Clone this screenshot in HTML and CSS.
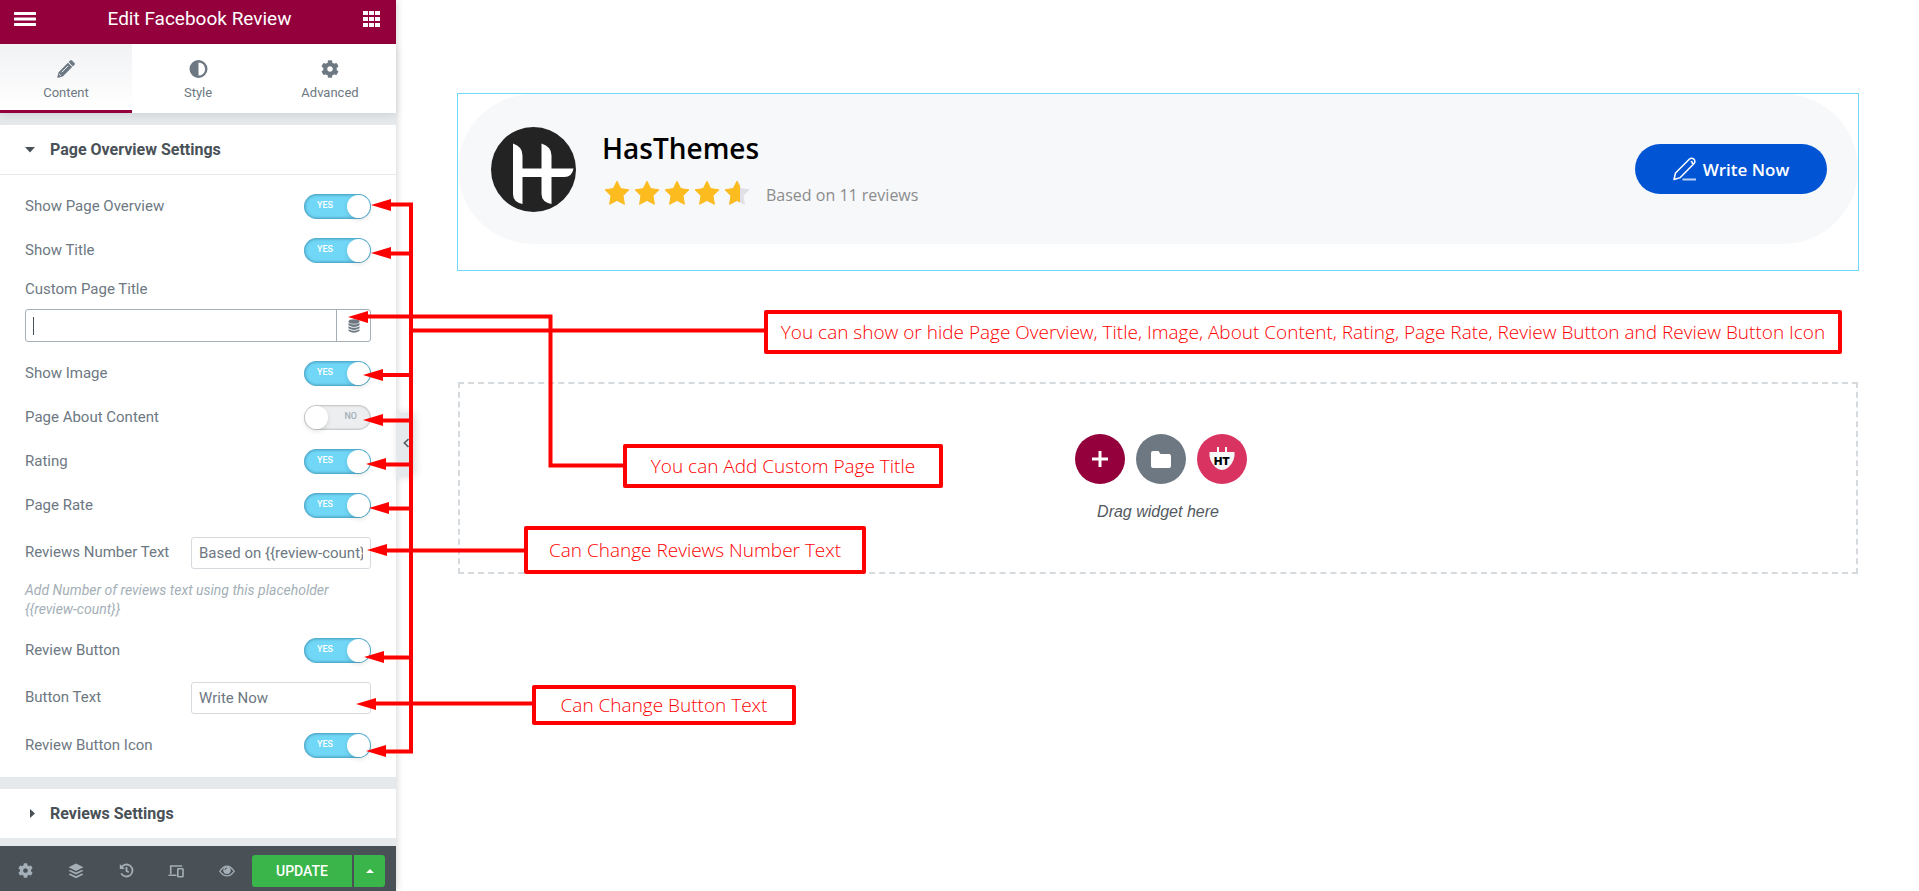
FILE: index.html
```html
<!DOCTYPE html>
<html lang="en">
<head>
  <meta charset="UTF-8">
  <meta name="viewport" content="width=device-width, initial-scale=1.0">
  <title>Edit Facebook Review</title>
  <link rel="stylesheet" href="styles.css">
</head>
<body>

<svg class="sprite" aria-hidden="true">
  <symbol id="cog" viewBox="0 0 512 512"><path fill="currentColor" d="M487.4 315.7l-42.6-24.6c4.3-23.2 4.3-47 0-70.2l42.6-24.6c4.9-2.8 7.1-8.6 5.5-14-11.1-35.6-30-67.8-54.7-94.6-3.8-4.1-10-5.1-14.8-2.3L380.8 110c-17.9-15.4-38.5-27.3-60.8-35.1V25.8c0-5.6-3.9-10.5-9.4-11.7-36.7-8.2-74.3-7.8-109.2 0-5.5 1.2-9.4 6.1-9.4 11.7V75c-22.2 7.9-42.8 19.8-60.8 35.1L88.7 85.500c-4.9-2.8-11-1.9-14.8 2.3-24.7 26.7-43.6 58.9-54.7 94.6-1.7 5.4.6 11.2 5.5 14L67.3 221c-4.3 23.2-4.3 47 0 70.2l-42.6 24.6c-4.9 2.8-7.1 8.6-5.5 14 11.1 35.6 30 67.8 54.7 94.6 3.8 4.1 10 5.1 14.8 2.3l42.6-24.6c17.9 15.4 38.5 27.3 60.8 35.1v49.2c0 5.6 3.9 10.5 9.4 11.7 36.7 8.2 74.3 7.8 109.2 0 5.5-1.2 9.4-6.1 9.4-11.7v-49.2c22.2-7.9 42.8-19.8 60.8-35.1l42.6 24.6c4.9 2.8 11 1.9 14.8-2.3 24.7-26.7 43.6-58.9 54.7-94.6 1.5-5.5-.7-11.3-5.6-14.1zM256 336c-44.1 0-80-35.9-80-80s35.9-80 80-80 80 35.9 80 80-35.9 80-80 80z"/></symbol>
  <symbol id="star" viewBox="0 0 26 26"><path d="M13 1.200l3.700 7.400 8.200 1.200-5.900 5.900 1.400 8.600L13 20.400l-7.400 3.900L7 15.700 1.100 9.800l8.200-1.200z" stroke-width="1" stroke-linejoin="round"/></symbol>
  <symbol id="arrow" viewBox="0 0 20 12"><path fill="#f00" d="M0 6L20 0v12z"/></symbol>
</svg>

<div class="editor">

  <aside class="panel">
    <header class="panel-header">
      <button class="icon-btn" aria-label="Menu">
        <svg width="22" height="14" viewBox="0 0 22 14"><path fill="#fff" d="M1 0h20a1 1 0 0 1 0 3H1a1 1 0 0 1 0-3zM1 5.500h20a1 1 0 0 1 0 3H1a1 1 0 0 1 0-3zM1 11h20a1 1 0 0 1 0 3H1a1 1 0 0 1 0-3z"/></svg>
      </button>
      <h1>Edit Facebook Review</h1>
      <button class="icon-btn" aria-label="Widgets">
        <svg width="17" height="16" viewBox="0 0 17 16"><path fill="#fff" d="M0 0h5v4H0zM6 0h5v4H6zM12 0h5v4h-5zM0 6h5v4H0zM6 6h5v4H6zM12 6h5v4h-5zM0 12h5v4H0zM6 12h5v4H6zM12 12h5v4h-5z"/></svg>
      </button>
    </header>

    <nav class="tabs">
      <button class="tab active">
        <svg width="18" height="18" viewBox="0 0 18 18"><path fill="currentColor" d="M11.600 2.100l1.600-1.600q.9-.8 1.800 0l2.500 2.500q.8.9 0 1.800l-1.600 1.600zM10.900 2.800l4.300 4.300-9.400 9.400-4.700 1.300q-1 .2-.8-.8l1.300-4.800z"/><path stroke="#fff" stroke-width=".9" fill="none" d="M4.800 12.200l6.300-6.300M2.200 14l1.800 1.800"/></svg>
        Content
      </button>
      <button class="tab">
        <svg width="19" height="18" viewBox="0 0 18 18"><circle cx="9" cy="9" r="7.800" fill="none" stroke="currentColor" stroke-width="2.400"/><path fill="currentColor" d="M9 1a8 8 0 0 0 0 16z"/></svg>
        Style
      </button>
      <button class="tab">
        <svg width="18" height="18"><use href="#cog"/></svg>
        Advanced
      </button>
    </nav>

    <div class="panel-body">
      <section class="section">
        <h2 class="section-title"><svg width="10" height="6" viewBox="0 0 10 6"><path fill="currentColor" d="M0 0h10L5 5.500z"/></svg>Page Overview Settings</h2>
        <div class="controls">
          <div class="control">
            <label for="overview">Show Page Overview</label>
            <span class="switch"><input type="checkbox" id="overview" checked><span class="state">YES</span></span>
          </div>
          <div class="control">
            <label for="title">Show Title</label>
            <span class="switch"><input type="checkbox" id="title" checked><span class="state">YES</span></span>
          </div>
          <div class="control-block">
            <label for="custom-title">Custom Page Title</label>
            <div class="input-group">
              <span class="caret"></span>
              <input type="text" id="custom-title">
              <button aria-label="Dynamic tags">
                <svg width="12" height="14" viewBox="0 0 12 14"><g fill="currentColor"><ellipse cx="6" cy="2.500" rx="5.500" ry="2.300"/><path d="M.5 4q5.500 3 11 0v2.300q-5.500 3.400-11 0zM.5 7.300q5.500 3 11 0v2q-5.500 3.400-11 0zM.5 10.300q5.500 3 11 0v1.700q-5.500 3.400-11 0z"/></g></svg>
              </button>
            </div>
          </div>
          <div class="control">
            <label for="image">Show Image</label>
            <span class="switch"><input type="checkbox" id="image" checked><span class="state">YES</span></span>
          </div>
          <div class="control">
            <label for="about">Page About Content</label>
            <span class="switch"><input type="checkbox" id="about"><span class="state">NO</span></span>
          </div>
          <div class="control">
            <label for="rating">Rating</label>
            <span class="switch"><input type="checkbox" id="rating" checked><span class="state">YES</span></span>
          </div>
          <div class="control">
            <label for="rate">Page Rate</label>
            <span class="switch"><input type="checkbox" id="rate" checked><span class="state">YES</span></span>
          </div>
          <div>
            <div class="control">
              <label for="number-text">Reviews Number Text</label>
              <input class="text-input" type="text" id="number-text" value="Based on {{review-count}} reviews">
            </div>
            <p class="description">Add Number of reviews text using this placeholder {{review-count}}</p>
          </div>
          <div class="control">
            <label for="button">Review Button</label>
            <span class="switch"><input type="checkbox" id="button" checked><span class="state">YES</span></span>
          </div>
          <div class="control">
            <label for="button-text">Button Text</label>
            <input class="text-input" type="text" id="button-text" value="Write Now">
          </div>
          <div class="control">
            <label for="button-icon">Review Button Icon</label>
            <span class="switch"><input type="checkbox" id="button-icon" checked><span class="state">YES</span></span>
          </div>
        </div>
      </section>

      <section class="section">
        <h2 class="section-title closed"><svg width="10" height="9" viewBox="0 0 10 9"><path fill="currentColor" d="M5 0l5 4.500L5 9z"/></svg>Reviews Settings</h2>
      </section>
    </div>

    <footer class="panel-footer">
      <div class="tools">
        <button aria-label="Settings"><svg width="15" height="15"><use href="#cog"/></svg></button>
        <button aria-label="Navigator"><svg width="16" height="16" viewBox="0 0 16 16"><g fill="currentColor"><path d="M8 .5l7.500 3.700L8 8 .5 4.200z"/><path d="M.5 7.800l1.800-.9L8 9.600l5.700-2.700 1.800.9L8 11.500z"/><path d="M.5 11.400l1.800-.9L8 13.200l5.700-2.700 1.800.9L8 15.300z"/></g></svg></button>
        <button aria-label="History"><svg width="15" height="15" viewBox="0 0 15 15"><path fill="none" stroke="currentColor" stroke-width="1.800" d="M2.200 4.700a6 6 0 1 1 0 5.600M7.500 4v4l2.300 1.300"/><path fill="currentColor" d="M.8 1v5h5z"/></svg></button>
        <button aria-label="Responsive Mode"><svg width="16" height="14" viewBox="0 0 16 14"><path fill="none" stroke="currentColor" stroke-width="1.600" d="M2.700 10V2h11.500M.5 11.200h8"/><rect x="9.800" y="4.800" width="5.200" height="8" rx=".6" fill="none" stroke="currentColor" stroke-width="1.600"/></svg></button>
        <button aria-label="Preview Changes"><svg width="16" height="12" viewBox="0 0 16 12"><path fill="none" stroke="currentColor" stroke-width="1.300" d="M.8 6.300Q8-4 15.200 6.300 8 15.500.8 6.300z"/><circle cx="8" cy="5.300" r="3.700" fill="currentColor"/><path d="M6 5q0-2 2-2" fill="none" stroke="#495157"/></svg></button>
      </div>
      <button class="update">UPDATE</button>
      <button class="update-more" aria-label="Save options"><svg width="8" height="4" viewBox="0 0 8 4"><path fill="#fff" d="M4 0l4 4H0z"/></svg></button>
    </footer>
  </aside>

  <main class="preview">
    <button class="collapse" aria-label="Hide panel"><svg width="6" height="10" viewBox="0 0 6 10"><path d="M5.500 1L1.300 5l4.200 4" fill="none" stroke="#556068" stroke-width="1.600"/></svg></button>

    <div class="widget">
      <div class="overview">
        <svg class="logo" width="85" height="85" viewBox="0 0 85 85">
          <circle cx="42.500" cy="42.500" r="42.500" fill="#232323"/>
          <path fill="#fff" d="M22 16.500q9.500 3 9.500 12V41.500h19V16.500q10 3 10 12v13h22q-1.500 8.500-9 8.500h-13v27q-10-2-10-10V50h-19v27q-9.500-2-9.500-10z"/>
        </svg>
        <div class="info">
          <h3>HasThemes</h3>
          <div class="rating">
            <div class="stars">
              <svg width="26" height="26"><use href="#star"/></svg>
              <svg width="26" height="26"><use href="#star"/></svg>
              <svg width="26" height="26"><use href="#star"/></svg>
              <svg width="26" height="26"><use href="#star"/></svg>
              <svg class="partial" width="26" height="26" viewBox="0 0 26 26">
                <clipPath id="filled"><path d="M0 0h16v26H0z"/></clipPath>
                <use class="empty" href="#star"/>
                <use href="#star" clip-path="url(#filled)"/>
              </svg>
            </div>
            <span>Based on 11 reviews</span>
          </div>
        </div>
        <a class="write" href="#">
          <svg width="23" height="24" viewBox="0 0 23 24"><path fill="none" stroke="#fff" stroke-width="1.500" stroke-linejoin="round" d="M1 22.500l1.500-6.500L16.500 2q2.200-1.700 4.300.1 2 2.200.3 4.400L7.300 20.600zM17.800 4.500q2 .2 1.500 2.500"/><path d="M9.500 22.500H23" stroke="#b9d0f3" stroke-width="2"/></svg>
          Write Now
        </a>
      </div>
    </div>

    <div class="drop-area">
      <div class="add-buttons">
        <button class="add" aria-label="Add section"><svg width="16" height="16" viewBox="0 0 16 16"><path stroke="#fff" stroke-width="3" d="M8 0v16M0 8h16"/></svg></button>
        <button class="add folder" aria-label="Add template"><svg width="20" height="17" viewBox="0 0 20 17"><path fill="#fff" d="M2 0h5.500l2 3H18q2 0 2 2v10q0 2-2 2H2q-2 0-2-2V2q0-2 2-2z"/></svg></button>
        <button class="add library" aria-label="HT library">
          <svg width="26" height="24" viewBox="0 0 26 24"><path fill="#f7f7f7" d="M8 0h2v5h6V0h2v5h7.500q.5 4-1 8-4 9.500-11.500 10Q5.500 22.500 1.500 13 0 9 .5 5H8z"/><text x="13" y="18" text-anchor="middle">HT</text></svg>
        </button>
      </div>
      <p>Drag widget here</p>
    </div>
  </main>

  <!-- notes drawn over the editor -->
  <div class="notes">
    <svg class="lines" width="1860" height="891">
      <path d="M388 204.500H411V751.500H384M388 253.500H411M380 375H411M380 420.500H411M382 464.500H411M386 508.500H411M382 657.500H411M411 330.500H766M364 316.500H550.500V465.500H624M384 550.500H526M372 703.500H534"/>
      <use href="#arrow" x="371" y="199" width="20" height="12"/>
      <use href="#arrow" x="371" y="247" width="20" height="12"/>
      <use href="#arrow" x="348" y="311" width="20" height="12"/>
      <use href="#arrow" x="363" y="369" width="20" height="12"/>
      <use href="#arrow" x="363" y="414" width="20" height="12"/>
      <use href="#arrow" x="366" y="458" width="20" height="12"/>
      <use href="#arrow" x="369" y="502" width="20" height="12"/>
      <use href="#arrow" x="367" y="544" width="20" height="12"/>
      <use href="#arrow" x="364" y="651" width="20" height="12"/>
      <use href="#arrow" x="356" y="698" width="20" height="12"/>
      <use href="#arrow" x="366" y="745" width="20" height="12"/>
    </svg>
    <p class="note note-toggles">You can show or hide Page Overview, Title, Image, About Content, Rating, Page Rate, Review Button and Review Button Icon</p>
    <p class="note note-title">You can Add Custom Page Title</p>
    <p class="note note-number">Can Change Reviews Number Text</p>
    <p class="note note-button">Can Change Button Text</p>
  </div>

</div>

</body>
</html>
```
FILE: styles.css
```css
* {
  box-sizing: border-box;
}
body {
  margin: 0;
  font-family: Roboto, Arial, sans-serif;
  font-size: 15px;
  color: #6d7882;
  background: #fff;
}
h1, h2, h3, p {
  margin: 0;
}
button {
  padding: 0;
  border: 0;
  background: none;
  font-family: inherit;
  color: inherit;
  cursor: pointer;
}
svg {
  display: block;
  flex: none;
}
.sprite {
  position: absolute;
  width: 0;
  height: 0;
}
.editor {
  position: relative;
  display: flex;
  min-height: 100vh;
  overflow: hidden;
}

/* left panel */
.panel {
  position: relative;
  display: flex;
  flex-direction: column;
  flex: none;
  width: 396px;
  background: #e6e9ec;
  box-shadow: 0 0 8px rgba(0,0,0,0.2);
}
.panel-header {
  display: flex;
  align-items: center;
  justify-content: space-between;
  height: 44px;
  padding: 0 16px 6px 14px;
  background: #93003c;
  color: #fff;
}
.panel-header h1 {
  padding-bottom: 2px;
  font-size: 19px;
  font-weight: 400;
}
.tabs {
  display: flex;
  height: 69px;
  background: #fff;
  box-shadow: 0 2px 8px rgba(0,0,0,0.1);
}
.tab {
  display: flex;
  flex: 1;
  flex-direction: column;
  align-items: center;
  gap: 7px;
  padding-top: 16px;
  font-size: 13px;
  border-bottom: 3px solid transparent;
}
.tab.active {
  background: linear-gradient(#f1f2f4, #fff);
  border-bottom-color: #93003c;
}
.panel-body {
  flex: 1;
  padding: 12px 0 8px;
}
.section {
  margin-bottom: 12px;
  background: #fff;
}
.section:last-child {
  margin-bottom: 0;
}
.section-title {
  display: flex;
  align-items: center;
  gap: 15px;
  height: 50px;
  padding-left: 25px;
  font-size: 16px;
  font-weight: 700;
  color: #495157;
  border-bottom: 1px solid #e6e9ec;
}
.section-title.closed {
  height: 49px;
  padding-bottom: 1px;
  border-bottom: 0;
}
.controls {
  display: flex;
  flex-direction: column;
  gap: 19px;
  padding: 19px 25px;
}
.control {
  display: flex;
  align-items: center;
  justify-content: space-between;
}
.control label {
  padding-bottom: 2px;
}
.control-block label {
  display: block;
  margin-bottom: 12px;
  line-height: 15px;
}
.text-input {
  width: 180px;
  height: 32px;
  padding: 0 7px;
  border: 1px solid #d5dadf;
  border-radius: 3px;
  font: 15px Roboto, Arial, sans-serif;
  color: #6d7882;
}
.input-group {
  position: relative;
  display: flex;
  height: 33px;
  border: 1px solid #a4afb7;
  border-radius: 3px;
}
.input-group input {
  flex: 1;
  min-width: 0;
  padding: 0 7px;
  border: 0;
  background: none;
  font: inherit;
}
.input-group button {
  display: grid;
  place-items: center;
  width: 34px;
  border-left: 1px solid #a4afb7;
}
.caret {
  position: absolute;
  left: 7px;
  top: 7px;
  width: 1px;
  height: 18px;
  background: #495157;
}
.description {
  margin-top: 12px;
  font-size: 14px;
  line-height: 19px;
  font-style: italic;
  color: #a4afb7;
}

/* yes/no switch */
.switch {
  position: relative;
  width: 67px;
  height: 25px;
  font-size: 9px;
  font-weight: 500;
}
.switch input {
  display: block;
  appearance: none;
  width: 100%;
  height: 100%;
  margin: 0;
  border-radius: 13px;
  background: #eceeef;
  box-shadow: inset 0 0 2px 1px rgba(0,0,0,0.2);
}
.switch input::after {
  content: "";
  position: absolute;
  top: 1px;
  left: 1px;
  width: 23px;
  height: 23px;
  border-radius: 50%;
  background: #fff;
  box-shadow: 0 2px 5px rgba(0,0,0,0.12);
}
.switch input:checked {
  background: #71d7f7;
  box-shadow: inset 0 0 3px 1px rgba(0,60,90,0.4);
}
.switch input:checked::after {
  left: 43px;
}
.switch .state {
  position: absolute;
  top: 0;
  right: 14px;
  line-height: 23px;
  color: #a4afb7;
  pointer-events: none;
}
.switch input:checked + .state {
  right: auto;
  left: 13px;
  color: #fff;
}

.panel-footer {
  display: flex;
  align-items: center;
  height: 45px;
  padding: 4px 11px 0 0;
  background: #495157;
}
.tools {
  display: flex;
  flex: 1;
  color: #a4afb7;
}
.tools button {
  display: grid;
  flex: 1;
  place-items: center;
}
.update, .update-more {
  height: 32px;
  background: #39b54a;
  color: #fff;
}
.update {
  width: 100px;
  border-radius: 3px 0 0 3px;
  font-size: 14px;
  font-weight: 500;
}
.update-more {
  display: grid;
  place-items: center;
  width: 31px;
  margin-left: 2px;
  border-radius: 0 3px 3px 0;
}

/* page preview */
.preview {
  position: relative;
  flex: 1;
  min-width: 0;
  padding: 93px 60px 0 61px;
}
.collapse {
  position: absolute;
  left: 0;
  top: 413px;
  width: 17px;
  height: 64px;
  padding: 0 0 4px 7px;
  border-radius: 0 3px 3px 0;
  background: #e6e9ec;
  box-shadow: 2px 0 8px rgba(0,0,0,0.15);
}
.widget {
  height: 178px;
  border: 1px solid #71d7f7;
}
.overview {
  display: flex;
  align-items: center;
  height: 150px;
  padding: 0 31px 0 33px;
  border-radius: 75px;
  background: #f7f8fa;
  font-family: "Open Sans", "Segoe UI", sans-serif;
}
.info {
  flex: 1;
  margin-left: 26px;
}
.info h3 {
  font-size: 28px;
  line-height: 36px;
  font-weight: 600;
  color: #000;
}
.rating {
  display: flex;
  align-items: center;
  gap: 16px;
  margin: 12px 0 0 2px;
  font-size: 16px;
  line-height: 26px;
  color: #8c8c8c;
}
.rating span {
  padding-top: 4px;
}
.stars {
  display: flex;
  gap: 4px;
  fill: #fcbc20;
  stroke: #fcbc20;
}
.stars .empty {
  fill: #e1e0e6;
  stroke: #e1e0e6;
}
.write {
  display: flex;
  align-items: center;
  justify-content: center;
  gap: 7px;
  width: 192px;
  height: 50px;
  border-radius: 25px;
  background: #0154d4;
  color: #fff;
  font-size: 17px;
  font-weight: 600;
  text-decoration: none;
}
.drop-area {
  height: 192px;
  margin: 111px 1px 0;
  padding-top: 50px;
  border: 2px dashed #d5dadf;
  text-align: center;
}
.add-buttons {
  display: flex;
  justify-content: center;
  gap: 11px;
  padding-left: 6px;
}
.add {
  display: grid;
  place-items: center;
  width: 50px;
  height: 50px;
  border-radius: 50%;
  background: #93003c;
}
.add.folder {
  background: #6d7882;
}
.add.library {
  background: #d93361;
}
.add text {
  font: 900 11px Inter, sans-serif;
  fill: #000;
}
.drop-area p {
  margin-top: 18px;
  font: italic 16px/19px "Liberation Sans", Arial, sans-serif;
  color: #54595f;
}

/* red notes and arrows over the screen */
.notes {
  position: absolute;
  inset: 0;
  pointer-events: none;
}
.lines {
  fill: none;
  stroke: #f00;
  stroke-width: 4px;
}
.lines use {
  stroke: none;
}
.note {
  position: absolute;
  display: grid;
  place-items: center;
  height: 44px;
  border: 4px solid #f00;
  border-radius: 2px;
  background: #fff;
  font: 300 19px "Open Sans", sans-serif;
  color: #f00;
  white-space: nowrap;
}
.note-toggles {
  left: 764px;
  top: 310px;
  width: 1078px;
}
.note-title {
  left: 623px;
  top: 444px;
  width: 320px;
}
.note-number {
  left: 524px;
  top: 526px;
  width: 342px;
  height: 48px;
}
.note-button {
  left: 532px;
  top: 685px;
  width: 264px;
  height: 40px;
}
```
